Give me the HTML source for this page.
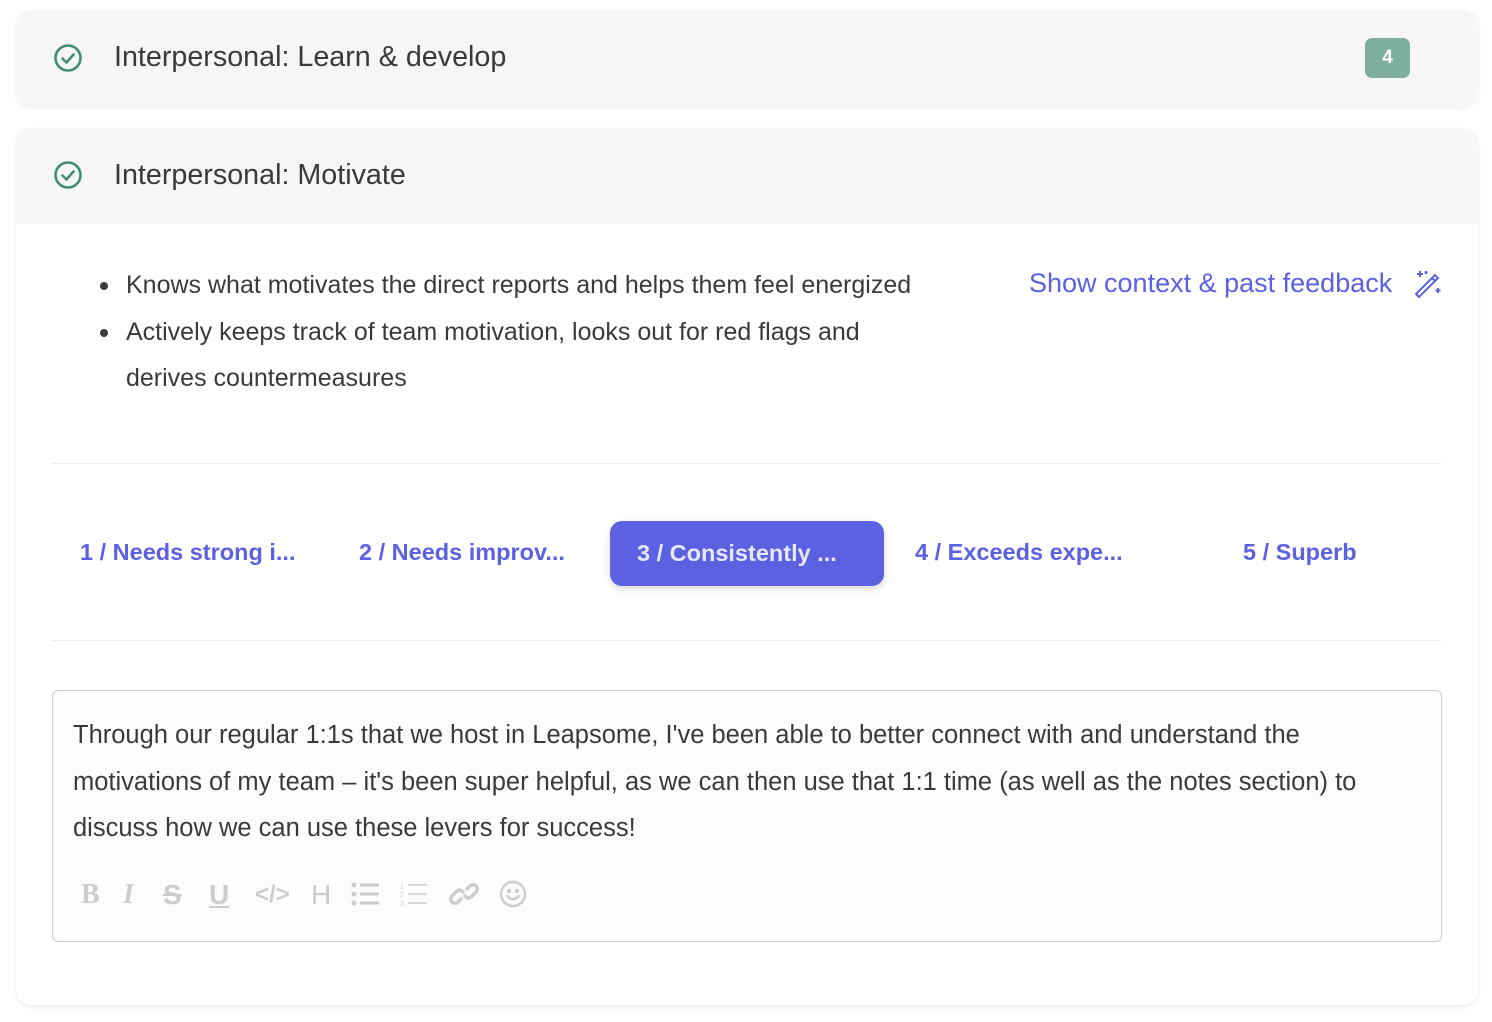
<!DOCTYPE html>
<html><head><style>
body{margin:0;background:#fff;width:1492px;height:1022px;overflow:hidden;font-family:"Liberation Sans",sans-serif;color:#333;}
.card{position:absolute;left:16px;width:1462px;background:#f6f6f6;border-radius:16px;box-shadow:0 2px 6px rgba(0,0,0,.08);}
.chk{position:absolute;left:37px;}
.title{position:absolute;left:98px;font-size:28.7px;color:#3a3a3a;}
.badge{position:absolute;left:1349px;top:28px;width:45px;height:40px;border-radius:7px;background:#7faf9e;color:#fff;font-weight:bold;font-size:19px;text-align:center;line-height:40px}
.body{position:absolute;left:0;top:96px;width:1462px;height:781px;background:#fff;border-radius:0 0 16px 16px}
ul{position:absolute;left:110px;top:38px;margin:0;padding-left:0;font-size:25px;line-height:46.5px;width:800px;color:#3a3a3a}
li{margin-left:0;list-style:none;position:relative}
li:before{content:"";position:absolute;left:-26px;top:20px;width:8px;height:8px;border-radius:50%;background:#3a3a3a}
.link{position:absolute;left:1013px;top:44px;font-size:27px;color:#5b61e0}
.hr{position:absolute;left:36px;width:1390px;height:1px;background:#eee}
.tab{position:absolute;top:315px;font-size:23.5px;font-weight:bold;color:#5b61e0}
.sel{position:absolute;left:594px;top:297px;width:274px;height:65px;border-radius:12px;background:#5b61e0;box-shadow:0 3px 8px rgba(0,0,0,.15);color:#e6e8ff;font-size:23.5px;font-weight:bold;line-height:65px;padding-left:27px;box-sizing:border-box}
.ta{position:absolute;left:36px;top:466px;width:1390px;height:252px;border:1px solid #ccc;border-radius:6px;background:#fcfcfc;box-sizing:border-box}
.ta p{margin:0;position:absolute;left:20px;top:21px;width:1330px;font-size:25.5px;line-height:46.5px;color:#3a3a3a}
.tb{position:absolute;top:188px;font-size:28px;color:#ccc;font-weight:bold}
</style></head><body>
<div class="card" style="top:10px;height:96px">
<svg class="chk" style="top:33px" width="30" height="30" viewBox="0 0 30 30"><circle cx="15" cy="15" r="12.5" fill="none" stroke="#3f8f72" stroke-width="2.6"/><path d="M9.5 15.5l4 4 7-8" fill="none" stroke="#3f8f72" stroke-width="2.6" stroke-linecap="round" stroke-linejoin="round"/></svg>
<div class="title" style="top:31px">Interpersonal: Learn &amp; develop</div>
<div class="badge">4</div>
</div>
<div class="card" style="top:128px;height:877px">
<svg class="chk" style="top:32px" width="30" height="30" viewBox="0 0 30 30"><circle cx="15" cy="15" r="12.5" fill="none" stroke="#3f8f72" stroke-width="2.6"/><path d="M9.5 15.5l4 4 7-8" fill="none" stroke="#3f8f72" stroke-width="2.6" stroke-linecap="round" stroke-linejoin="round"/></svg>
<div class="title" style="top:31px">Interpersonal: Motivate</div>
<div class="body">
<ul><li>Knows what motivates the direct reports and helps them feel energized</li><li>Actively keeps track of team motivation, looks out for red flags and derives countermeasures</li></ul>
<div class="link">Show context &amp; past feedback</div>
<svg style="position:absolute;left:1396px;top:44px" width="32" height="32" viewBox="0 0 32 32" fill="none" stroke="#5b61e0" stroke-width="2"><path d="M4 26l3 3 19-19-3-3z"/><path d="M20 10l3 3"/><path d="M8 3v6M5 6h6M26 20v5M23.5 22.5h5M14 3v3M12.5 4.5h3"/></svg>
<div class="hr" style="top:239px"></div>
<div class="tab" style="left:64px">1 / Needs strong i...</div>
<div class="tab" style="left:343px">2 / Needs improv...</div>
<div class="sel">3 / Consistently ...</div>
<div class="tab" style="left:899px">4 / Exceeds expe...</div>
<div class="tab" style="left:1227px">5 / Superb</div>
<div class="hr" style="top:416px"></div>
<div class="ta"><p>Through our regular 1:1s that we host in Leapsome, I've been able to better connect with and understand the motivations of my team – it's been super helpful, as we can then use that 1:1 time (as well as the notes section) to discuss how we can use these levers for success!</p>
<div class="tb" style="left:28px;font-family:'Liberation Serif',serif">B</div>
<div class="tb" style="left:70px;font-family:'Liberation Serif',serif;font-style:italic">I</div>
<div class="tb" style="left:110px;text-decoration:line-through">S</div>
<div class="tb" style="left:156px;text-decoration:underline">U</div>
<div class="tb" style="left:202px;font-size:24px;top:190px">&lt;/&gt;</div>
<div class="tb" style="left:258px;font-weight:normal">H</div>
<svg style="position:absolute;left:298px;top:190px" width="30" height="26" viewBox="0 0 30 26" fill="#ccc"><circle cx="3" cy="4" r="2.5"/><circle cx="3" cy="13" r="2.5"/><circle cx="3" cy="22" r="2.5"/><rect x="9" y="2.5" width="19" height="3"/><rect x="9" y="11.5" width="19" height="3"/><rect x="9" y="20.5" width="19" height="3"/></svg>
<svg style="position:absolute;left:347px;top:190px" width="30" height="26" viewBox="0 0 30 26" stroke="#ccc" stroke-width="1.6"><path d="M8 4h19M8 13h19M8 22h19"/><text x="0" y="8" font-size="7" fill="#ccc" stroke="none">1</text><text x="0" y="16" font-size="7" fill="#ccc" stroke="none">2</text><text x="0" y="25" font-size="7" fill="#ccc" stroke="none">3</text></svg>
<svg style="position:absolute;left:396px;top:188px" width="30" height="30" viewBox="0 0 30 30" fill="none" stroke="#ccc" stroke-width="3.5" stroke-linecap="round"><path d="M12 20l-3 3a4 4 0 0 1-6-6l5-5a4 4 0 0 1 6 1"/><path d="M18 10l3-3a4 4 0 0 1 6 6l-5 5a4 4 0 0 1-6-1"/></svg>
<svg style="position:absolute;left:445px;top:188px" width="30" height="30" viewBox="0 0 30 30" fill="none" stroke="#ccc" stroke-width="2.4"><circle cx="15" cy="15" r="12"/><circle cx="11" cy="12" r="1" fill="#ccc"/><circle cx="19" cy="12" r="1" fill="#ccc"/><path d="M9.5 17a6.5 6.5 0 0 0 11 0" stroke-linecap="round"/></svg>
</div>
</div>
</div>
</body></html>
